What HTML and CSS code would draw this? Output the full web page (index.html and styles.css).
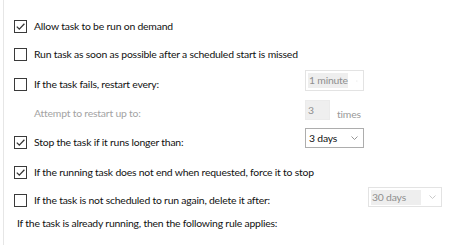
FILE: index.html
```html
<!DOCTYPE html>
<html>
<head>
<meta charset="utf-8">
<link rel="stylesheet" href="styles.css">
</head>
<body>
<div class="panel">
  <div class="row r1">
    <span class="cb checked"><svg viewBox="0 0 11 11" width="11" height="11"><polyline points="1.8,5.6 4.3,8.1 9.4,2.8" /></svg></span>
    <span class="label">Allow task to be run on demand</span>
  </div>
  <div class="row r2">
    <span class="cb"></span>
    <span class="label">Run task as soon as possible after a scheduled start is missed</span>
  </div>
  <div class="row r3">
    <span class="cb"></span>
    <span class="label fixed">If the task fails, restart every:</span>
    <span class="combo disabled c1"><span class="val">1 minute</span><svg class="chev" viewBox="0 0 7 4" width="7" height="4"><polyline points="0.5,0.5 3.5,3.5 6.5,0.5" /></svg></span>
  </div>
  <div class="row r4">
    <span class="label fixed indent dim">Attempt to restart up to:</span>
    <span class="textbox">3</span>
    <span class="suffix dim">times</span>
  </div>
  <div class="row r5">
    <span class="cb checked"><svg viewBox="0 0 11 11" width="11" height="11"><polyline points="1.8,5.6 4.3,8.1 9.4,2.8" /></svg></span>
    <span class="label fixed">Stop the task if it runs longer than:</span>
    <span class="combo c2"><span class="val">3 days</span><svg class="chev" viewBox="0 0 7 4" width="7" height="4"><polyline points="0.5,0.5 3.5,3.5 6.5,0.5" /></svg></span>
  </div>
  <div class="row r6">
    <span class="cb checked"><svg viewBox="0 0 11 11" width="11" height="11"><polyline points="1.8,5.6 4.3,8.1 9.4,2.8" /></svg></span>
    <span class="label">If the running task does not end when requested, force it to stop</span>
  </div>
  <div class="row r7">
    <span class="cb"></span>
    <span class="label fixed wide">If the task is not scheduled to run again, delete it after:</span>
    <span class="combo disabled c3"><span class="val">30 days</span><svg class="chev" viewBox="0 0 7 4" width="7" height="4"><polyline points="0.5,0.5 3.5,3.5 6.5,0.5" /></svg></span>
  </div>
  <div class="row r8">
    <span class="label plain">If the task is already running, then the following rule applies:</span>
  </div>
</div>
</body>
</html>
```

FILE: styles.css
```css
html, body {
  margin: 0;
  padding: 0;
  background: #ffffff;
}
body {
  font-family: Lato, "Noto Sans", sans-serif;
  font-size: 10.4px;
  letter-spacing: -0.2px;
  color: #111111;
  width: 474px;
  height: 245px;
  overflow: hidden;
}
.panel {
  margin-left: 3px;
  border-left: 1px solid #e6e6e6;
  padding-left: 10px;
  padding-top: 12px;
  height: 233px;
}
.row {
  display: flex;
  align-items: center;
  white-space: nowrap;
}
.r1 { height: 28px; }
.r2 { height: 28px; }
.r3 { height: 32px; }
.r4 { height: 26px; }
.r5 { height: 32px; }
.r6 { height: 28px; }
.r7 { height: 28px; }
.r8 { height: 18px; }

.cb {
  box-sizing: border-box;
  width: 13px;
  height: 13px;
  border: 1px solid #3a3a3a;
  background: #ffffff;
  margin-right: 7px;
  display: flex;
  align-items: center;
  justify-content: center;
  flex: none;
}
.cb svg polyline {
  fill: none;
  stroke: #333333;
  stroke-width: 1.3;
}
.label.fixed { width: 271px; }
.label.wide { width: 334px; }
.label.indent { margin-left: 20px; }
.label.plain { margin-left: 3px; }
.dim { color: #a3a3a3; }

.combo {
  box-sizing: border-box;
  display: flex;
  align-items: center;
  border: 1px solid #adadad;
  background: #ffffff;
  align-self: flex-start;
  padding: 0 5px 0 2px;
}
.combo .val {
  flex: 1;
  padding-left: 1px;
  line-height: 15px;
}
.combo .chev polyline {
  fill: none;
  stroke: #8a8a8a;
  stroke-width: 0.9;
}
.combo.disabled {
  border-color: #e3e3e3;
  color: #8f8f8f;
}
.combo.disabled .val {
  background: #eeeeee;
  margin-right: 8px;
}
.combo.disabled .chev polyline { stroke: #c4c4c4; }
.c1 { width: 59px; height: 21px; margin-top: 2px; }
.c2 { width: 59px; height: 20px; margin-top: 2px; }
.c2 .val { margin-right: 8px; }
.c3 { width: 74px; height: 20px; margin-top: 1px; }

.textbox {
  box-sizing: border-box;
  align-self: flex-start;
  width: 25px;
  height: 20px;
  background: #efefef;
  border: 1px solid #ebebeb;
  color: #8f8f8f;
  padding-left: 2px;
  line-height: 18px;
}
.suffix {
  margin-left: 7px;
  padding-top: 1px;
  color: #999999;
}
```
